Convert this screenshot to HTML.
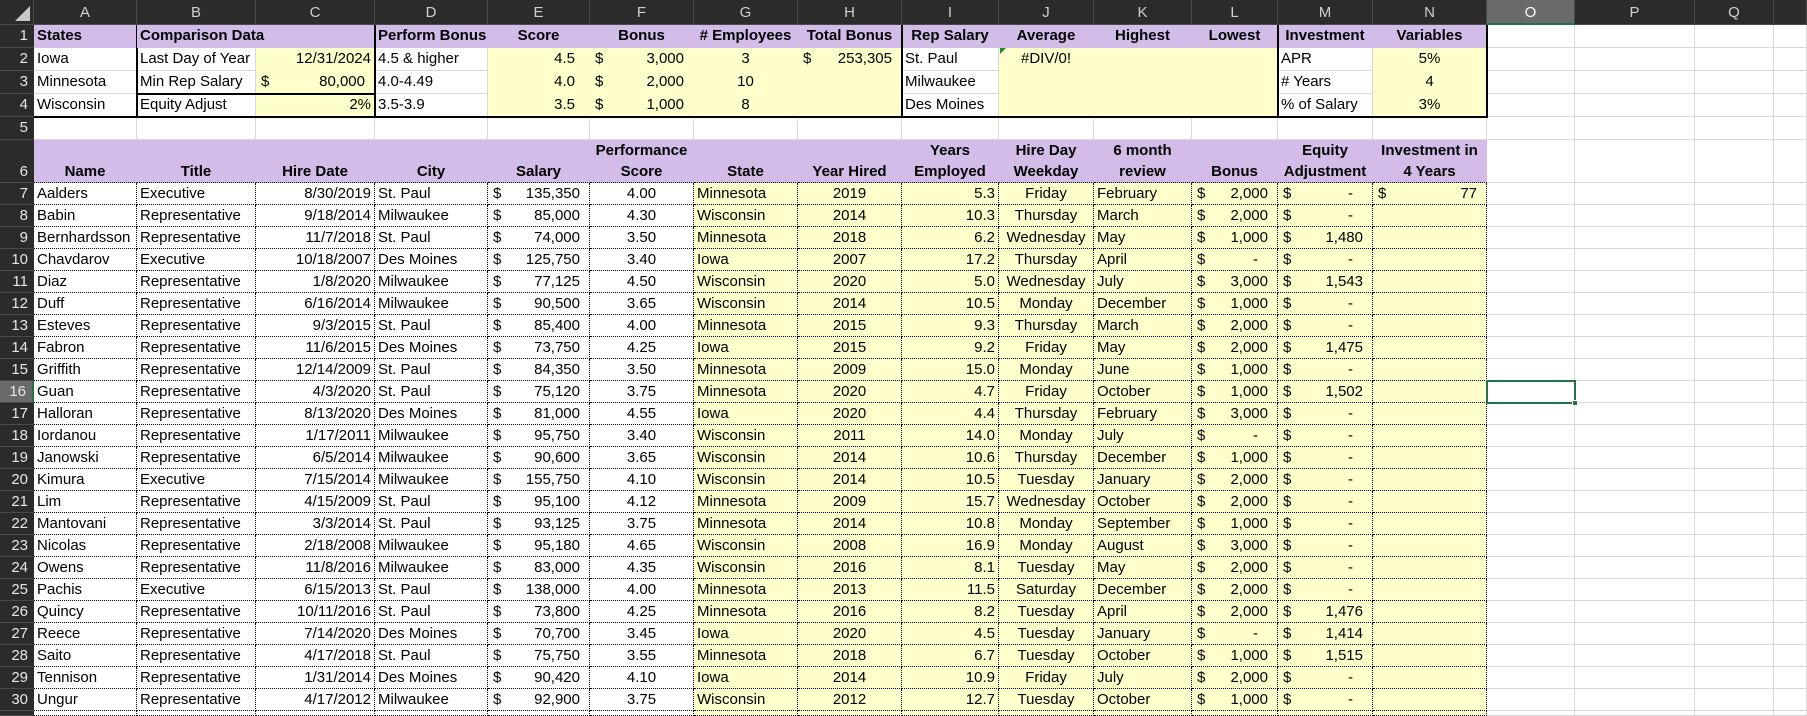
<!DOCTYPE html>
<html><head><meta charset="utf-8">
<style>
*{margin:0;padding:0;box-sizing:border-box}
body{width:1807px;height:716px;overflow:hidden;background:#fff;font-family:"Liberation Sans",Arial,sans-serif;font-size:15px;color:#000;position:relative}
.g{display:grid;grid-template-columns:34px 103px 119px 119px 113px 102px 104px 104px 104px 97px 95px 98px 86px 95px 114px 88px 120px 79px 33px;grid-template-rows:25px 23px 23px 23px 23px 23px 43px repeat(24,22px) 5px}
.g>div{border-right:1px solid #d9d9d9;border-bottom:1px solid #d9d9d9;padding:0 3px;white-space:nowrap;line-height:21px;overflow:visible}
.g>.k{background:#2b2b2b;color:#d0d0d0;text-align:center;border-right:1px solid #4a4a4a;border-bottom:1px solid #4a4a4a;line-height:26px;font-size:15px}
.g>.k.sel{background:#6a6a6a;color:#fff;border-bottom:2px solid #217346}
.g>.h{background:#2b2b2b;color:#e6e6e6;text-align:right;padding-right:6px;border-right:none;border-bottom:1px solid #4a4a4a;font-size:15px}
.g>.h.sel{background:#6a6a6a;border-right:2px solid #217346}
.g>.p{background:#d4bce8;border-color:#d4bce8;font-weight:bold}
.g>.y{background:#ffffcc;border-color:#ffffcc}
.g>.d{border-right:1px dotted #000;border-bottom:1px dotted #000}
.g>.dy{background:#ffffcc;border-right:1px dotted #000;border-bottom:1px dotted #000}
.g>.p6{background:#d4bce8;border-right-color:#d4bce8;border-bottom:1px dotted #000;font-weight:bold;text-align:center;display:flex;flex-direction:column;justify-content:flex-end;line-height:21px}
.r{text-align:right}
.m{text-align:center}
.g>.a{display:flex;justify-content:space-between;padding:0 9px 0 5px}
.z{padding-right:10px}
.ln{position:absolute;background:#000}
</style></head><body>
<div class="g">
<div class="k" style="position:relative"><span style="position:absolute;right:3px;bottom:3px;width:0;height:0;border-left:15px solid transparent;border-bottom:15px solid #c8c8c8"></span></div>
<div class="k">A</div><div class="k">B</div><div class="k">C</div><div class="k">D</div><div class="k">E</div><div class="k">F</div><div class="k">G</div><div class="k">H</div><div class="k">I</div><div class="k">J</div><div class="k">K</div><div class="k">L</div><div class="k">M</div><div class="k">N</div><div class="k sel">O</div><div class="k">P</div><div class="k">Q</div><div class="k"></div>

<div class="h">1</div><div class="p">States</div><div class="p" style="position:relative;z-index:1">Comparison Data</div><div class="p"></div><div class="p">Perform Bonus</div><div class="p m">Score</div><div class="p m">Bonus</div><div class="p m"># Employees</div><div class="p m">Total Bonus</div><div class="p m">Rep Salary</div><div class="p m">Average</div><div class="p m">Highest</div><div class="p m">Lowest</div><div class="p m">Investment</div><div class="p m">Variables</div><div></div><div></div><div></div><div></div>

<div class="h">2</div><div>Iowa</div><div>Last Day of Year</div><div class="y r">12/31/2024</div><div>4.5 &amp; higher</div><div class="y r" style="padding-right:14px">4.5</div><div class="y a"><span>$</span><span>3,000</span></div><div class="y m">3</div><div class="y a"><span>$</span><span>253,305</span></div><div>St. Paul</div><div class="y m" style="position:relative"><span style="position:absolute;left:1px;top:0;width:0;height:0;border-top:6px solid #1e8a3c;border-right:6px solid transparent"></span>#DIV/0!</div><div class="y"></div><div class="y"></div><div>APR</div><div class="y m">5%</div><div></div><div></div><div></div><div></div>

<div class="h">3</div><div>Minnesota</div><div>Min Rep Salary</div><div class="y a"><span>$</span><span>80,000</span></div><div>4.0-4.49</div><div class="y r" style="padding-right:14px">4.0</div><div class="y a"><span>$</span><span>2,000</span></div><div class="y m">10</div><div class="y"></div><div>Milwaukee</div><div class="y"></div><div class="y"></div><div class="y"></div><div># Years</div><div class="y m">4</div><div></div><div></div><div></div><div></div>

<div class="h">4</div><div>Wisconsin</div><div>Equity Adjust</div><div class="y r">2%</div><div>3.5-3.9</div><div class="y r" style="padding-right:14px">3.5</div><div class="y a"><span>$</span><span>1,000</span></div><div class="y m">8</div><div class="y"></div><div>Des Moines</div><div class="y"></div><div class="y"></div><div class="y"></div><div>% of Salary</div><div class="y m">3%</div><div></div><div></div><div></div><div></div>

<div class="h">5</div><div></div><div></div><div></div><div></div><div></div><div></div><div></div><div></div><div></div><div></div><div></div><div></div><div></div><div></div><div></div><div></div><div></div><div></div>

<div class="h" style="display:flex;align-items:flex-end;justify-content:flex-end">6</div><div class="p6">Name</div><div class="p6">Title</div><div class="p6">Hire Date</div><div class="p6">City</div><div class="p6">Salary</div><div class="p6"><span>Performance</span><span>Score</span></div><div class="p6">State</div><div class="p6">Year Hired</div><div class="p6"><span>Years</span><span>Employed</span></div><div class="p6"><span>Hire Day</span><span>Weekday</span></div><div class="p6"><span>6 month</span><span>review</span></div><div class="p6">Bonus</div><div class="p6"><span>Equity</span><span>Adjustment</span></div><div class="p6"><span>Investment in</span><span>4 Years</span></div><div></div><div></div><div></div><div></div>

<div class="h">7</div><div class="d">Aalders</div><div class="d">Executive</div><div class="d r">8/30/2019</div><div class="d">St. Paul</div><div class="d a"><span>$</span><span>135,350</span></div><div class="d m">4.00</div><div class="dy">Minnesota</div><div class="dy m">2019</div><div class="dy r">5.3</div><div class="dy m">Friday</div><div class="dy">February</div><div class="dy a"><span>$</span><span>2,000</span></div><div class="dy a"><span>$</span><span class="z">-</span></div><div class="dy a"><span>$</span><span>77</span></div><div></div><div></div><div></div><div></div>

<div class="h">8</div><div class="d">Babin</div><div class="d">Representative</div><div class="d r">9/18/2014</div><div class="d">Milwaukee</div><div class="d a"><span>$</span><span>85,000</span></div><div class="d m">4.30</div><div class="dy">Wisconsin</div><div class="dy m">2014</div><div class="dy r">10.3</div><div class="dy m">Thursday</div><div class="dy">March</div><div class="dy a"><span>$</span><span>2,000</span></div><div class="dy a"><span>$</span><span class="z">-</span></div><div class="dy"></div><div></div><div></div><div></div><div></div>

<div class="h">9</div><div class="d">Bernhardsson</div><div class="d">Representative</div><div class="d r">11/7/2018</div><div class="d">St. Paul</div><div class="d a"><span>$</span><span>74,000</span></div><div class="d m">3.50</div><div class="dy">Minnesota</div><div class="dy m">2018</div><div class="dy r">6.2</div><div class="dy m">Wednesday</div><div class="dy">May</div><div class="dy a"><span>$</span><span>1,000</span></div><div class="dy a"><span>$</span><span>1,480</span></div><div class="dy"></div><div></div><div></div><div></div><div></div>

<div class="h">10</div><div class="d">Chavdarov</div><div class="d">Executive</div><div class="d r">10/18/2007</div><div class="d">Des Moines</div><div class="d a"><span>$</span><span>125,750</span></div><div class="d m">3.40</div><div class="dy">Iowa</div><div class="dy m">2007</div><div class="dy r">17.2</div><div class="dy m">Thursday</div><div class="dy">April</div><div class="dy a"><span>$</span><span class="z">-</span></div><div class="dy a"><span>$</span><span class="z">-</span></div><div class="dy"></div><div></div><div></div><div></div><div></div>

<div class="h">11</div><div class="d">Diaz</div><div class="d">Representative</div><div class="d r">1/8/2020</div><div class="d">Milwaukee</div><div class="d a"><span>$</span><span>77,125</span></div><div class="d m">4.50</div><div class="dy">Wisconsin</div><div class="dy m">2020</div><div class="dy r">5.0</div><div class="dy m">Wednesday</div><div class="dy">July</div><div class="dy a"><span>$</span><span>3,000</span></div><div class="dy a"><span>$</span><span>1,543</span></div><div class="dy"></div><div></div><div></div><div></div><div></div>

<div class="h">12</div><div class="d">Duff</div><div class="d">Representative</div><div class="d r">6/16/2014</div><div class="d">Milwaukee</div><div class="d a"><span>$</span><span>90,500</span></div><div class="d m">3.65</div><div class="dy">Wisconsin</div><div class="dy m">2014</div><div class="dy r">10.5</div><div class="dy m">Monday</div><div class="dy">December</div><div class="dy a"><span>$</span><span>1,000</span></div><div class="dy a"><span>$</span><span class="z">-</span></div><div class="dy"></div><div></div><div></div><div></div><div></div>

<div class="h">13</div><div class="d">Esteves</div><div class="d">Representative</div><div class="d r">9/3/2015</div><div class="d">St. Paul</div><div class="d a"><span>$</span><span>85,400</span></div><div class="d m">4.00</div><div class="dy">Minnesota</div><div class="dy m">2015</div><div class="dy r">9.3</div><div class="dy m">Thursday</div><div class="dy">March</div><div class="dy a"><span>$</span><span>2,000</span></div><div class="dy a"><span>$</span><span class="z">-</span></div><div class="dy"></div><div></div><div></div><div></div><div></div>

<div class="h">14</div><div class="d">Fabron</div><div class="d">Representative</div><div class="d r">11/6/2015</div><div class="d">Des Moines</div><div class="d a"><span>$</span><span>73,750</span></div><div class="d m">4.25</div><div class="dy">Iowa</div><div class="dy m">2015</div><div class="dy r">9.2</div><div class="dy m">Friday</div><div class="dy">May</div><div class="dy a"><span>$</span><span>2,000</span></div><div class="dy a"><span>$</span><span>1,475</span></div><div class="dy"></div><div></div><div></div><div></div><div></div>

<div class="h">15</div><div class="d">Griffith</div><div class="d">Representative</div><div class="d r">12/14/2009</div><div class="d">St. Paul</div><div class="d a"><span>$</span><span>84,350</span></div><div class="d m">3.50</div><div class="dy">Minnesota</div><div class="dy m">2009</div><div class="dy r">15.0</div><div class="dy m">Monday</div><div class="dy">June</div><div class="dy a"><span>$</span><span>1,000</span></div><div class="dy a"><span>$</span><span class="z">-</span></div><div class="dy"></div><div></div><div></div><div></div><div></div>

<div class="h sel">16</div><div class="d">Guan</div><div class="d">Representative</div><div class="d r">4/3/2020</div><div class="d">St. Paul</div><div class="d a"><span>$</span><span>75,120</span></div><div class="d m">3.75</div><div class="dy">Minnesota</div><div class="dy m">2020</div><div class="dy r">4.7</div><div class="dy m">Friday</div><div class="dy">October</div><div class="dy a"><span>$</span><span>1,000</span></div><div class="dy a"><span>$</span><span>1,502</span></div><div class="dy"></div><div></div><div></div><div></div><div></div>

<div class="h">17</div><div class="d">Halloran</div><div class="d">Representative</div><div class="d r">8/13/2020</div><div class="d">Des Moines</div><div class="d a"><span>$</span><span>81,000</span></div><div class="d m">4.55</div><div class="dy">Iowa</div><div class="dy m">2020</div><div class="dy r">4.4</div><div class="dy m">Thursday</div><div class="dy">February</div><div class="dy a"><span>$</span><span>3,000</span></div><div class="dy a"><span>$</span><span class="z">-</span></div><div class="dy"></div><div></div><div></div><div></div><div></div>

<div class="h">18</div><div class="d">Iordanou</div><div class="d">Representative</div><div class="d r">1/17/2011</div><div class="d">Milwaukee</div><div class="d a"><span>$</span><span>95,750</span></div><div class="d m">3.40</div><div class="dy">Wisconsin</div><div class="dy m">2011</div><div class="dy r">14.0</div><div class="dy m">Monday</div><div class="dy">July</div><div class="dy a"><span>$</span><span class="z">-</span></div><div class="dy a"><span>$</span><span class="z">-</span></div><div class="dy"></div><div></div><div></div><div></div><div></div>

<div class="h">19</div><div class="d">Janowski</div><div class="d">Representative</div><div class="d r">6/5/2014</div><div class="d">Milwaukee</div><div class="d a"><span>$</span><span>90,600</span></div><div class="d m">3.65</div><div class="dy">Wisconsin</div><div class="dy m">2014</div><div class="dy r">10.6</div><div class="dy m">Thursday</div><div class="dy">December</div><div class="dy a"><span>$</span><span>1,000</span></div><div class="dy a"><span>$</span><span class="z">-</span></div><div class="dy"></div><div></div><div></div><div></div><div></div>

<div class="h">20</div><div class="d">Kimura</div><div class="d">Executive</div><div class="d r">7/15/2014</div><div class="d">Milwaukee</div><div class="d a"><span>$</span><span>155,750</span></div><div class="d m">4.10</div><div class="dy">Wisconsin</div><div class="dy m">2014</div><div class="dy r">10.5</div><div class="dy m">Tuesday</div><div class="dy">January</div><div class="dy a"><span>$</span><span>2,000</span></div><div class="dy a"><span>$</span><span class="z">-</span></div><div class="dy"></div><div></div><div></div><div></div><div></div>

<div class="h">21</div><div class="d">Lim</div><div class="d">Representative</div><div class="d r">4/15/2009</div><div class="d">St. Paul</div><div class="d a"><span>$</span><span>95,100</span></div><div class="d m">4.12</div><div class="dy">Minnesota</div><div class="dy m">2009</div><div class="dy r">15.7</div><div class="dy m">Wednesday</div><div class="dy">October</div><div class="dy a"><span>$</span><span>2,000</span></div><div class="dy a"><span>$</span><span class="z">-</span></div><div class="dy"></div><div></div><div></div><div></div><div></div>

<div class="h">22</div><div class="d">Mantovani</div><div class="d">Representative</div><div class="d r">3/3/2014</div><div class="d">St. Paul</div><div class="d a"><span>$</span><span>93,125</span></div><div class="d m">3.75</div><div class="dy">Minnesota</div><div class="dy m">2014</div><div class="dy r">10.8</div><div class="dy m">Monday</div><div class="dy">September</div><div class="dy a"><span>$</span><span>1,000</span></div><div class="dy a"><span>$</span><span class="z">-</span></div><div class="dy"></div><div></div><div></div><div></div><div></div>

<div class="h">23</div><div class="d">Nicolas</div><div class="d">Representative</div><div class="d r">2/18/2008</div><div class="d">Milwaukee</div><div class="d a"><span>$</span><span>95,180</span></div><div class="d m">4.65</div><div class="dy">Wisconsin</div><div class="dy m">2008</div><div class="dy r">16.9</div><div class="dy m">Monday</div><div class="dy">August</div><div class="dy a"><span>$</span><span>3,000</span></div><div class="dy a"><span>$</span><span class="z">-</span></div><div class="dy"></div><div></div><div></div><div></div><div></div>

<div class="h">24</div><div class="d">Owens</div><div class="d">Representative</div><div class="d r">11/8/2016</div><div class="d">Milwaukee</div><div class="d a"><span>$</span><span>83,000</span></div><div class="d m">4.35</div><div class="dy">Wisconsin</div><div class="dy m">2016</div><div class="dy r">8.1</div><div class="dy m">Tuesday</div><div class="dy">May</div><div class="dy a"><span>$</span><span>2,000</span></div><div class="dy a"><span>$</span><span class="z">-</span></div><div class="dy"></div><div></div><div></div><div></div><div></div>

<div class="h">25</div><div class="d">Pachis</div><div class="d">Executive</div><div class="d r">6/15/2013</div><div class="d">St. Paul</div><div class="d a"><span>$</span><span>138,000</span></div><div class="d m">4.00</div><div class="dy">Minnesota</div><div class="dy m">2013</div><div class="dy r">11.5</div><div class="dy m">Saturday</div><div class="dy">December</div><div class="dy a"><span>$</span><span>2,000</span></div><div class="dy a"><span>$</span><span class="z">-</span></div><div class="dy"></div><div></div><div></div><div></div><div></div>

<div class="h">26</div><div class="d">Quincy</div><div class="d">Representative</div><div class="d r">10/11/2016</div><div class="d">St. Paul</div><div class="d a"><span>$</span><span>73,800</span></div><div class="d m">4.25</div><div class="dy">Minnesota</div><div class="dy m">2016</div><div class="dy r">8.2</div><div class="dy m">Tuesday</div><div class="dy">April</div><div class="dy a"><span>$</span><span>2,000</span></div><div class="dy a"><span>$</span><span>1,476</span></div><div class="dy"></div><div></div><div></div><div></div><div></div>

<div class="h">27</div><div class="d">Reece</div><div class="d">Representative</div><div class="d r">7/14/2020</div><div class="d">Des Moines</div><div class="d a"><span>$</span><span>70,700</span></div><div class="d m">3.45</div><div class="dy">Iowa</div><div class="dy m">2020</div><div class="dy r">4.5</div><div class="dy m">Tuesday</div><div class="dy">January</div><div class="dy a"><span>$</span><span class="z">-</span></div><div class="dy a"><span>$</span><span>1,414</span></div><div class="dy"></div><div></div><div></div><div></div><div></div>

<div class="h">28</div><div class="d">Saito</div><div class="d">Representative</div><div class="d r">4/17/2018</div><div class="d">St. Paul</div><div class="d a"><span>$</span><span>75,750</span></div><div class="d m">3.55</div><div class="dy">Minnesota</div><div class="dy m">2018</div><div class="dy r">6.7</div><div class="dy m">Tuesday</div><div class="dy">October</div><div class="dy a"><span>$</span><span>1,000</span></div><div class="dy a"><span>$</span><span>1,515</span></div><div class="dy"></div><div></div><div></div><div></div><div></div>

<div class="h">29</div><div class="d">Tennison</div><div class="d">Representative</div><div class="d r">1/31/2014</div><div class="d">Des Moines</div><div class="d a"><span>$</span><span>90,420</span></div><div class="d m">4.10</div><div class="dy">Iowa</div><div class="dy m">2014</div><div class="dy r">10.9</div><div class="dy m">Friday</div><div class="dy">July</div><div class="dy a"><span>$</span><span>2,000</span></div><div class="dy a"><span>$</span><span class="z">-</span></div><div class="dy"></div><div></div><div></div><div></div><div></div>

<div class="h">30</div><div class="d">Ungur</div><div class="d">Representative</div><div class="d r">4/17/2012</div><div class="d">Milwaukee</div><div class="d a"><span>$</span><span>92,900</span></div><div class="d m">3.75</div><div class="dy">Wisconsin</div><div class="dy m">2012</div><div class="dy r">12.7</div><div class="dy m">Tuesday</div><div class="dy">October</div><div class="dy a"><span>$</span><span>1,000</span></div><div class="dy a"><span>$</span><span class="z">-</span></div><div class="dy"></div><div></div><div></div><div></div><div></div>

<div class="h"></div><div class="d"></div><div class="d"></div><div class="d"></div><div class="d"></div><div class="d"></div><div class="d"></div><div class="dy"></div><div class="dy"></div><div class="dy"></div><div class="dy"></div><div class="dy"></div><div class="dy"></div><div class="dy"></div><div class="dy"></div><div></div><div></div><div></div><div></div>
</div>

<div class="ln" style="left:136px;top:25px;width:2px;height:92px"></div>
<div class="ln" style="left:374px;top:25px;width:2px;height:92px"></div>
<div class="ln" style="left:137px;top:93px;width:238px;height:2px"></div>
<div class="ln" style="left:901px;top:25px;width:2px;height:92px"></div>
<div class="ln" style="left:1277px;top:25px;width:2px;height:92px"></div>
<div class="ln" style="left:1486px;top:25px;width:2px;height:92px"></div>
<div class="ln" style="left:34px;top:116px;width:1454px;height:2px"></div>

<div style="position:absolute;left:1486px;top:380px;width:90px;height:24px;border:2px solid #217346"></div>
<div style="position:absolute;left:1572px;top:400px;width:6px;height:6px;background:#217346;border:1px solid #fff"></div>
</body></html>
